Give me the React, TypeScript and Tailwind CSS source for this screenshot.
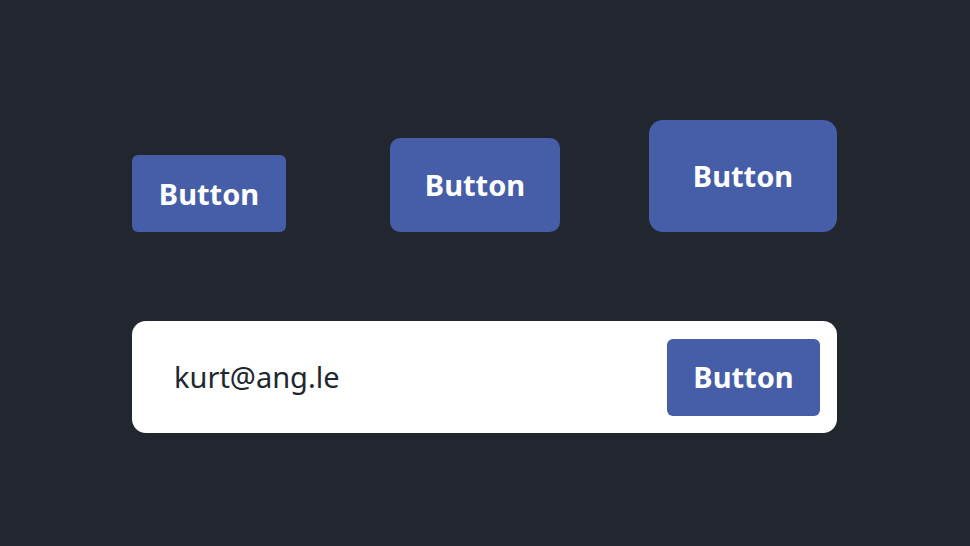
export default function App() {
  const font = { fontFamily: '"Noto Sans", "Open Sans", sans-serif' };
  return (
    <div className="min-h-[546px] w-full bg-[#22272f] pt-[120px]" style={font}>
      <div className="ml-[132px] w-[705px]">
        <div className="flex items-end">
          <button className="h-[77px] w-[154px] rounded-[6px] bg-[#465ea8] text-[29px] font-bold text-white">
            Button
          </button>
          <button className="ml-[104px] h-[94px] w-[170px] rounded-[10px] bg-[#465ea8] text-[29px] font-bold text-white">
            Button
          </button>
          <button className="ml-[89px] h-[112px] w-[188px] rounded-[14px] bg-[#465ea8] text-[29px] font-bold text-white">
            Button
          </button>
        </div>
        <div className="mt-[89px] flex h-[112px] items-center rounded-[14px] bg-white pl-[42px] pr-[17px]">
          <span className="flex-1 text-[29px] text-[#22272f]">kurt@ang.le</span>
          <button className="h-[77px] w-[153px] rounded-[6px] bg-[#465ea8] text-[29px] font-bold text-white">
            Button
          </button>
        </div>
      </div>
    </div>
  );
}
